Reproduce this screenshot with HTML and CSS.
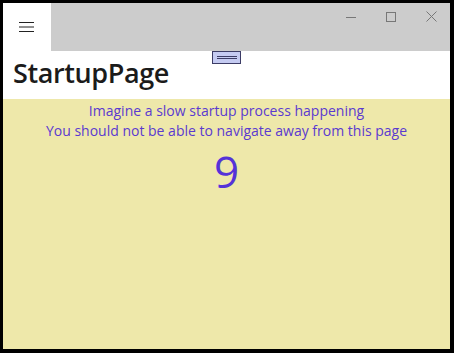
FILE: index.html
```html
<!DOCTYPE html>
<html>
<head>
<meta charset="utf-8">
<link rel="stylesheet" href="styles.css">
</head>
<body>
<div class="window">
  <div class="titlebar">
    <div class="hamburger">
      <svg width="16" height="11" viewBox="0 0 16 11"><path d="M0 1.5H15M0 6H15M0 10.5H15" stroke="#222" stroke-width="1"/></svg>
    </div>
    <div class="drag">
      <div class="caps">
        <svg class="cap" width="10" height="10" viewBox="0 0 10 10"><path d="M0 5.5H10" stroke="#777" stroke-width="1"/></svg>
        <svg class="cap" width="10" height="10" viewBox="0 0 10 10"><rect x="0.5" y="0.5" width="9" height="9" fill="none" stroke="#777" stroke-width="1"/></svg>
        <svg class="cap" width="11" height="11" viewBox="0 0 11 11"><path d="M0.5 0.5L10.5 10.5M10.5 0.5L0.5 10.5" stroke="#777" stroke-width="1"/></svg>
      </div>
    </div>
  </div>
  <div class="header">
    <h1 class="title">StartupPage</h1>
    <div class="grip"><span></span><span></span></div>
  </div>
  <div class="content">
    <p class="line">Imagine a slow startup process happening</p>
    <p class="line">You should not be able to navigate away from this page</p>
    <div class="count">9</div>
  </div>
</div>
</body>
</html>
```
FILE: styles.css
```css
html, body {
  margin: 0;
  padding: 0;
  background: #000;
  height: 100%;
}
body {
  padding: 3px 4px 4px 3px;
  box-sizing: border-box;
  font-family: "Open Sans", "Noto Sans", sans-serif;
}
.window {
  height: 100%;
  display: flex;
  flex-direction: column;
  background: #eee8aa;
}
.titlebar {
  height: 48px;
  display: flex;
  flex: none;
}
.hamburger {
  width: 48px;
  background: #fff;
  display: flex;
  align-items: center;
  justify-content: center;
}
.hamburger svg { margin-top: -2px; margin-left: -1px; }
.drag {
  flex: 1;
  background: #cccccc;
  display: flex;
  justify-content: flex-end;
  align-items: flex-start;
}
.caps {
  display: flex;
  gap: 30px;
  padding: 8px 13px 0 0;
  align-items: center;
  height: 11px;
}
.header {
  height: 48px;
  background: #fff;
  position: relative;
  flex: none;
}
.title {
  margin: 0;
  padding: 4px 0 0 10px;
  font-size: 27px;
  font-weight: 600;
  color: #1b1b1b;
  line-height: 36px;
  letter-spacing: -0.4px;
}
.grip {
  position: absolute;
  left: 209px;
  top: 0;
  width: 27px;
  height: 11px;
  background: #c5cbf2;
  border: 1px solid #3c3c66;
  display: flex;
  flex-direction: column;
  align-items: center;
  justify-content: center;
  gap: 1px;
}
.grip span {
  display: block;
  width: 20px;
  height: 1px;
  background: #3c3c66;
}
.content {
  flex: 1;
  text-align: center;
  color: #5a3ad0;
  padding-top: 2px;
}
.line {
  margin: 0;
  font-size: 14px;
  line-height: 20px;
}
.count {
  font-size: 44px;
  line-height: 60px;
  color: #5533d8;
}
```
